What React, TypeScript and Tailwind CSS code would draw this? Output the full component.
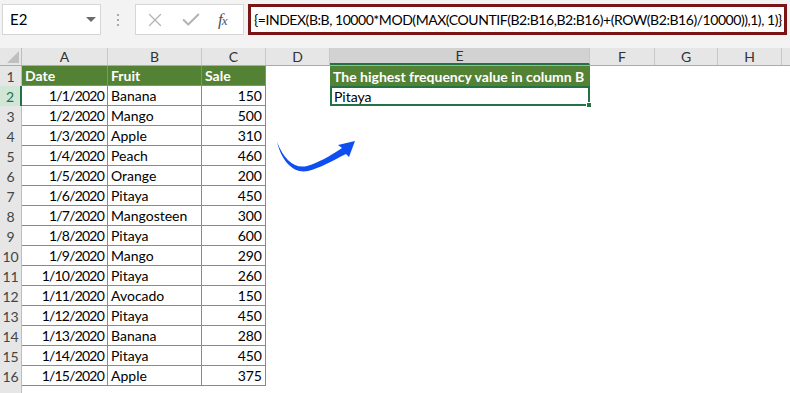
import { X, Check } from "lucide-react";

const rows: [string, string, number][] = [
  ["1/1/2020", "Banana", 150],
  ["1/2/2020", "Mango", 500],
  ["1/3/2020", "Apple", 310],
  ["1/4/2020", "Peach", 460],
  ["1/5/2020", "Orange", 200],
  ["1/6/2020", "Pitaya", 450],
  ["1/7/2020", "Mangosteen", 300],
  ["1/8/2020", "Pitaya", 600],
  ["1/9/2020", "Mango", 290],
  ["1/10/2020", "Pitaya", 260],
  ["1/11/2020", "Avocado", 150],
  ["1/12/2020", "Pitaya", 450],
  ["1/13/2020", "Banana", 280],
  ["1/14/2020", "Pitaya", 450],
  ["1/15/2020", "Apple", 375],
];

const cols = [
  { l: "A", w: "w-[86px]" },
  { l: "B", w: "w-[94px]" },
  { l: "C", w: "w-[64px]" },
  { l: "D", w: "w-[64px]" },
  { l: "E", w: "w-[260px]" },
  { l: "F", w: "w-[65px]" },
  { l: "G", w: "w-[63px]" },
  { l: "H", w: "w-[64px]" },
];

function FormulaBar() {
  return (
    <div className="h-[48px] bg-[#f3f3f3] flex items-start pt-[4px] pl-[2px]">
      <div className="w-[99px] h-[31px] bg-white border border-[#d6d6d6] flex items-center justify-between pl-[7px] pr-[4px] text-[15px] text-black">
        <span>E2</span>
        <span className="w-0 h-0 border-l-[5px] border-r-[5px] border-t-[5px] border-l-transparent border-r-transparent border-t-[#6b6b6b]" />
      </div>
      <div className="w-[34px] h-[31px] flex flex-col items-center justify-center gap-[3px]">
        <span className="w-[2px] h-[2px] bg-[#a8a8a8]" />
        <span className="w-[2px] h-[2px] bg-[#a8a8a8]" />
        <span className="w-[2px] h-[2px] bg-[#a8a8a8]" />
      </div>
      <div className="w-[109px] h-[31px] bg-white border border-[#d6d6d6] flex items-center pl-[8px] gap-[14px]">
        <X className="w-[22px] h-[22px] text-[#b3b3b3]" strokeWidth={1.4} />
        <Check className="w-[22px] h-[22px] text-[#b3b3b3]" strokeWidth={2.2} />
        <span className="font-['Liberation_Serif'] italic text-[17px] text-[#555] ml-[2px] tracking-[-1px]">
          f<span className="text-[13px]">x</span>
        </span>
      </div>
      <div className="ml-[4px] w-[539px] h-[31px] bg-white border-[3px] border-[#7b1515] flex items-center pl-[3px] text-[14px] tracking-[-0.45px] text-black whitespace-nowrap overflow-hidden">
        {"{=INDEX(B:B, 10000*MOD(MAX(COUNTIF(B2:B16,B2:B16)+(ROW(B2:B16)/10000)),1), 1)}"}
      </div>
    </div>
  );
}

function Arrow() {
  return (
    <svg
      className="absolute left-[270px] top-[130px]"
      width="95"
      height="50"
      viewBox="0 0 95 50"
    >
      <path
        d="M7,12 C12,32 24,44 38,41 C50,38 62,31 76,24 L79,27 L85,11 L68,15 L72,18 C60,26 48,33 37,36 C25,39 14,30 7,12 Z"
        fill="#0f4ff2"
      />
    </svg>
  );
}

export default function App() {
  return (
    <div className="w-[790px] h-[393px] bg-white overflow-hidden font-['Lato'] relative">
      <FormulaBar />
      {/* column headers */}
      <div className="flex h-[18px] bg-[#e6e6e6] border-b border-[#ababab]">
        <div className="w-[22px] shrink-0 border-r border-[#bdbdbd] relative overflow-hidden">
          <span className="absolute right-[2px] bottom-[2px] w-0 h-0 [border-right:12px_solid_#bfbfbf] [border-top:12px_solid_transparent]" />
        </div>
        {cols.map((c) => (
          <div
            key={c.l}
            className={`${c.w} shrink-0 flex items-center justify-center text-[14px] text-[#333] border-r border-[#c8c8c8] ${
              c.l === "E" ? "bg-[#d2d2d2] border-b-2 border-b-[#217346]" : ""
            }`}
          >
            {c.l}
          </div>
        ))}
      </div>
      {/* row 1 */}
      <div className="flex h-[20px]">
        <div className="w-[22px] shrink-0 bg-[#e6e6e6] border-r border-[#bdbdbd] text-[14px] text-[#444] flex items-center justify-center">
          1
        </div>
        <div className="w-[86px] shrink-0 bg-[#548235] border-r border-b border-[#8a8a8a] text-white font-bold text-[14px] pl-[3px] flex items-center">
          Date
        </div>
        <div className="w-[94px] shrink-0 bg-[#548235] border-r border-b border-[#8a8a8a] text-white font-bold text-[14px] pl-[3px] flex items-center">
          Fruit
        </div>
        <div className="w-[64px] shrink-0 bg-[#548235] border-r border-b border-[#8a8a8a] text-white font-bold text-[14px] pl-[3px] flex items-center">
          Sale
        </div>
        <div className="w-[64px] shrink-0" />
        <div className="w-[260px] shrink-0 bg-[#548235] text-white font-bold text-[14px] pl-[3px] flex items-center">
          The highest frequency value in column B
        </div>
      </div>
      {rows.map((r, i) => {
        const n = i + 2;
        const sel = n === 2;
        return (
          <div key={n} className="flex h-[20px]">
            <div
              className={`w-[22px] shrink-0 text-[14px] flex items-center justify-center ${
                sel
                  ? "bg-[#d2e6d8] text-[#217346] border-r-2 border-[#217346]"
                  : "bg-[#e6e6e6] text-[#444] border-r border-[#bdbdbd]"
              }`}
            >
              {n}
            </div>
            <div className="w-[86px] shrink-0 border-r border-b border-[#8a8a8a] text-[14px] tracking-[-0.8px] text-black pr-[3px] flex items-center justify-end">
              {r[0]}
            </div>
            <div className="w-[94px] shrink-0 border-r border-b border-[#8a8a8a] text-[14px] text-black pl-[3px] flex items-center">
              {r[1]}
            </div>
            <div className="w-[64px] shrink-0 border-r border-b border-[#8a8a8a] text-[14px] text-black pr-[3px] flex items-center justify-end">
              {r[2]}
            </div>
            <div className="w-[64px] shrink-0" />
            {sel && (
              <div className="w-[260px] shrink-0 border-2 border-[#217346] text-[14px] text-black pl-[2px] flex items-center relative">
                Pitaya
                <span className="absolute right-[-4px] bottom-[-4px] w-[6px] h-[6px] bg-[#217346] border border-white" />
              </div>
            )}
          </div>
        );
      })}
      <div className="flex h-[20px]">
        <div className="w-[22px] shrink-0 bg-[#e6e6e6] border-r border-[#bdbdbd]" />
      </div>
      <Arrow />
    </div>
  );
}
